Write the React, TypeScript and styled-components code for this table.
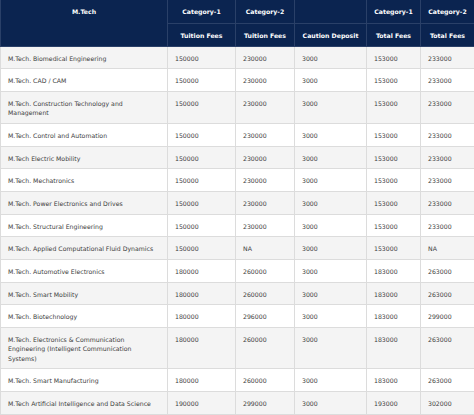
import React from 'react';
import styled, { createGlobalStyle } from 'styled-components';

const GlobalStyle = createGlobalStyle`
  body {
    margin: 0;
    background: #ffffff;
    font-family: "DejaVu Sans", "Open Sans", sans-serif;
  }
`;

const Table = styled.table`
  width: 474px;
  border-collapse: collapse;
  table-layout: fixed;
  font-size: 6.2px;
`;

const HeadCell = styled.th<{ $align?: string }>`
  background: #0b2450;
  color: #ffffff;
  font-weight: 700;
  text-align: center;
  vertical-align: top;
  height: 23px;
  padding: 8px 4px 0;
  box-sizing: border-box;
  border: 1px solid #2a4068;
  border-top: none;
  line-height: 8px;
`;

const Row = styled.tr<{ $striped: boolean }>`
  background: ${(p) => (p.$striped ? '#f4f4f4' : '#ffffff')};
`;

const Cell = styled.td`
  color: #3c3c3c;
  vertical-align: top;
  padding: 7px 7px 5.5px;
  line-height: 9.2px;
  border: 1px solid #dcdcdc;
  border-top: none;
`;

interface IFee {
  name: string;
  cat1: string;
  cat2: string;
  deposit: string;
  total1: string;
  total2: string;
}

const fees: IFee[] = [
  { name: 'M.Tech. Biomedical Engineering', cat1: '150000', cat2: '230000', deposit: '3000', total1: '153000', total2: '233000' },
  { name: 'M.Tech. CAD / CAM', cat1: '150000', cat2: '230000', deposit: '3000', total1: '153000', total2: '233000' },
  { name: 'M.Tech. Construction Technology and Management', cat1: '150000', cat2: '230000', deposit: '3000', total1: '153000', total2: '233000' },
  { name: 'M.Tech. Control and Automation', cat1: '150000', cat2: '230000', deposit: '3000', total1: '153000', total2: '233000' },
  { name: 'M.Tech Electric Mobility', cat1: '150000', cat2: '230000', deposit: '3000', total1: '153000', total2: '233000' },
  { name: 'M.Tech. Mechatronics', cat1: '150000', cat2: '230000', deposit: '3000', total1: '153000', total2: '233000' },
  { name: 'M.Tech. Power Electronics and Drives', cat1: '150000', cat2: '230000', deposit: '3000', total1: '153000', total2: '233000' },
  { name: 'M.Tech. Structural Engineering', cat1: '150000', cat2: '230000', deposit: '3000', total1: '153000', total2: '233000' },
  { name: 'M.Tech. Applied Computational Fluid Dynamics', cat1: '150000', cat2: 'NA', deposit: '3000', total1: '153000', total2: 'NA' },
  { name: 'M.Tech. Automotive Electronics', cat1: '180000', cat2: '260000', deposit: '3000', total1: '183000', total2: '263000' },
  { name: 'M.Tech. Smart Mobility', cat1: '180000', cat2: '260000', deposit: '3000', total1: '183000', total2: '263000' },
  { name: 'M.Tech. Biotechnology', cat1: '180000', cat2: '296000', deposit: '3000', total1: '183000', total2: '299000' },
  { name: 'M.Tech. Electronics & Communication Engineering (Intelligent Communication Systems)', cat1: '180000', cat2: '260000', deposit: '3000', total1: '183000', total2: '263000' },
  { name: 'M.Tech. Smart Manufacturing', cat1: '180000', cat2: '260000', deposit: '3000', total1: '183000', total2: '263000' },
  { name: 'M.Tech Artificial Intelligence and Data Science', cat1: '190000', cat2: '299000', deposit: '3000', total1: '193000', total2: '302000' },
];

export default function App() {
  return (
    <>
      <GlobalStyle />
      <Table>
        <colgroup>
          <col style={{ width: 167 }} />
          <col style={{ width: 68 }} />
          <col style={{ width: 59 }} />
          <col style={{ width: 72 }} />
          <col style={{ width: 54 }} />
          <col style={{ width: 54 }} />
        </colgroup>
        <thead>
          <tr>
            <HeadCell rowSpan={2}>M.Tech</HeadCell>
            <HeadCell>Category-1</HeadCell>
            <HeadCell>Category-2</HeadCell>
            <HeadCell></HeadCell>
            <HeadCell>Category-1</HeadCell>
            <HeadCell>Category-2</HeadCell>
          </tr>
          <tr>
            <HeadCell>Tuition Fees</HeadCell>
            <HeadCell>Tuition Fees</HeadCell>
            <HeadCell>Caution Deposit</HeadCell>
            <HeadCell>Total Fees</HeadCell>
            <HeadCell>Total Fees</HeadCell>
          </tr>
        </thead>
        <tbody>
          {fees.map((f, i) => (
            <Row key={f.name} $striped={i % 2 === 0}>
              <Cell>{f.name}</Cell>
              <Cell>{f.cat1}</Cell>
              <Cell>{f.cat2}</Cell>
              <Cell>{f.deposit}</Cell>
              <Cell>{f.total1}</Cell>
              <Cell>{f.total2}</Cell>
            </Row>
          ))}
        </tbody>
      </Table>
    </>
  );
}
